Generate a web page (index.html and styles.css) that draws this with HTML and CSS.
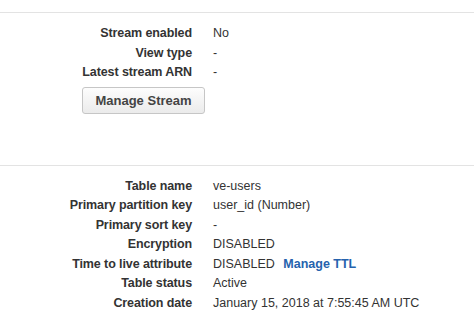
FILE: index.html
```html
<!DOCTYPE html>
<html>
<head>
    <title>Table details</title>
    <link rel="stylesheet" href="styles.css">
</head>
<body>
    <div class="section stream">
        <div class="details">
            <div class="label">Stream enabled</div>
            <div class="value">No</div>
            <div class="label">View type</div>
            <div class="value">-</div>
            <div class="label">Latest stream ARN</div>
            <div class="value">-</div>
        </div>
        <button class="btn">Manage Stream</button>
    </div>

    <div class="section overview">
        <div class="details">
            <div class="label">Table name</div>
            <div class="value">ve-users</div>
            <div class="label">Primary partition key</div>
            <div class="value">user_id (Number)</div>
            <div class="label">Primary sort key</div>
            <div class="value">-</div>
            <div class="label">Encryption</div>
            <div class="value">DISABLED</div>
            <div class="label">Time to live attribute</div>
            <div class="value">DISABLED <a href="#" class="link">Manage TTL</a></div>
            <div class="label">Table status</div>
            <div class="value">Active</div>
            <div class="label">Creation date</div>
            <div class="value">January 15, 2018 at 7:55:45 AM UTC</div>
        </div>
    </div>
</body>
</html>
```

FILE: styles.css
```css
body {
    margin: 0;
    padding-top: 12px;
    font-family: "Liberation Sans", Arial, sans-serif;
    font-size: 12.5px;
    color: #333;
    background-color: #fff;
}

.section {
    border-top: 1px solid #e3e3e3;
}

.stream {
    padding: 11px 0 51px;
}

.overview {
    padding-top: 11px;
}

.details {
    display: grid;
    grid-template-columns: 192px auto;
    column-gap: 21px;
    line-height: 19.5px;
}

.label {
    text-align: right;
    font-weight: bold;
    letter-spacing: -0.1px;
    color: #333;
}

.value {
    color: #333;
}

.btn {
    display: block;
    margin: 4px 0 0 82px;
    width: 123px;
    height: 27px;
    padding: 0;
    font-family: inherit;
    font-size: 13px;
    font-weight: bold;
    color: #444;
    background: linear-gradient(#fdfdfd, #ebebeb);
    border: 1px solid #c6c6c6;
    border-radius: 3px;
    cursor: pointer;
}

.link {
    margin-left: 5px;
    font-weight: bold;
    color: #2562ad;
    text-decoration: none;
}

.link:hover {
    text-decoration: underline;
}
```
